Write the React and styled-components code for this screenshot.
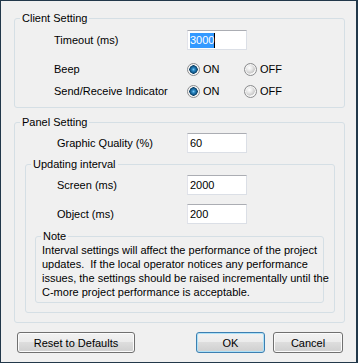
import React from "react";
import styled, { createGlobalStyle } from "styled-components";

const Global = createGlobalStyle`
  html, body {
    margin: 0;
    padding: 0;
    background: #f0f0f0;
  }
  * {
    box-sizing: border-box;
  }
`;

const Window = styled.div`
  width: 358px;
  height: 363px;
  background: #f0f0f0;
  border-style: solid;
  border-color: #22384a;
  border-width: 1px 2px 1px 1px;
  font-family: "Liberation Sans", Arial, sans-serif;
  font-size: 11px;
  color: #000;
  display: flex;
  flex-direction: column;
  overflow: hidden;
`;

const Group = styled.fieldset`
  margin: ${(p) => p.$margin || "0"};
  padding: 0 0 ${(p) => p.$pb || 0}px 0;
  width: ${(p) => p.$width}px;
  min-width: 0;
  border: 1px solid #d5dfe5;
  border-radius: 3px;
  display: flex;
  flex-direction: column;
`;

const Legend = styled.legend`
  margin-left: 5px;
  padding: 0 2px;
  line-height: 13px;
  height: 13px;
`;

const Row = styled.div`
  display: flex;
  align-items: center;
  height: ${(p) => p.$h || 20}px;
  margin-top: ${(p) => p.$mt || 0}px;
  padding-left: ${(p) => p.$pl}px;
`;

const Label = styled.div`
  width: ${(p) => p.$w}px;
  white-space: nowrap;
  line-height: 13px;
`;

const TextBox = styled.div`
  width: 60px;
  height: 20px;
  background: #fff;
  border: 1px solid #dbdfe6;
  border-top-color: #abadb3;
  border-left-color: #e2e3ea;
  padding-left: 2px;
  display: flex;
  align-items: center;
  line-height: 13px;
`;

const Selected = styled.span`
  background: #3399ff;
  color: #fff;
  padding: 1px 0;
  border-right: 1px solid #000;
`;

const RadioGroup = styled.div`
  display: flex;
`;

const RadioItem = styled.label`
  display: flex;
  align-items: center;
  width: 57px;
  line-height: 13px;
`;

const RadioDot = styled.span`
  width: 13px;
  height: 13px;
  border-radius: 50%;
  border: 1px solid #8b8c8e;
  margin-right: 3px;
  background: ${(p) =>
    p.$on
      ? "radial-gradient(circle at 50% 50%, #7ccbf5 0, #2a86c2 1.5px, #0e4f7d 3.5px, #0a3e63 4px, #e8e8e8 4.5px, #fafafa 6px)"
      : "radial-gradient(circle at 40% 35%, #ffffff 0, #e6e6e6 3px, #c9c9c9 5.5px, #f4f4f4 6px)"};
  box-shadow: inset 0 0 0 1px #f6f6f6;
  flex-shrink: 0;
`;

const NoteText = styled.div`
  padding: 0 4px 0 6px;
  line-height: 14px;
  white-space: pre;
`;

const Footer = styled.div`
  display: flex;
  margin-top: 9px;
  padding: 0 13px 0 16px;
`;

const Spacer = styled.div`
  flex: 1;
`;

const Button = styled.button`
  width: ${(p) => p.$w}px;
  height: 21px;
  margin-left: ${(p) => p.$ml || 0}px;
  font-family: "Liberation Sans", Arial, sans-serif;
  font-size: 11px;
  color: #000;
  padding: 0;
  border-radius: 3px;
  border: 1px solid ${(p) => (p.$default ? "#3c7fb1" : "#707070")};
  background: linear-gradient(#f2f2f2 0%, #ebebeb 49%, #dddddd 50%, #cfcfcf 100%);
  box-shadow: inset 0 0 0 1px ${(p) => (p.$default ? "#aee1f7" : "#fbfbfb")};
`;

const Radio = ({ on, children }) => (
  <RadioItem>
    <RadioDot $on={on} />
    {children}
  </RadioItem>
);

const noteLines = [
  "Interval settings will affect the performance of the project",
  "updates.  If the local operator notices any performance",
  "issues, the settings should be raised incrementally until the",
  "C-more project performance is acceptable.",
];

export default function App() {
  return (
    <>
      <Global />
      <Window>
        <Group $width={331} $margin="11px 0 0 13px" $pb={8}>
          <Legend>Client Setting</Legend>
          <Row $mt={5} $pl={39}>
            <Label $w={133}>Timeout (ms)</Label>
            <TextBox>
              <Selected>3000</Selected>
            </TextBox>
          </Row>
          <Row $mt={11} $h={16} $pl={39}>
            <Label $w={133}>Beep</Label>
            <RadioGroup>
              <Radio on>ON</Radio>
              <Radio>OFF</Radio>
            </RadioGroup>
          </Row>
          <Row $mt={6} $h={16} $pl={39}>
            <Label $w={133}>Send/Receive Indicator</Label>
            <RadioGroup>
              <Radio on>ON</Radio>
              <Radio>OFF</Radio>
            </RadioGroup>
          </Row>
        </Group>

        <Group $width={331} $margin="8px 0 0 13px" $pb={9}>
          <Legend>Panel Setting</Legend>
          <Row $mt={4} $pl={42}>
            <Label $w={130}>Graphic Quality (%)</Label>
            <TextBox>60</TextBox>
          </Row>
          <Group $width={310} $margin="5px 0 0 10px">
            <Legend>Updating interval</Legend>
            <Row $mt={4} $pl={31}>
              <Label $w={130}>Screen (ms)</Label>
              <TextBox>2000</TextBox>
            </Row>
            <Row $mt={9} $pl={31}>
              <Label $w={130}>Object (ms)</Label>
              <TextBox>200</TextBox>
            </Row>
            <Group $width={289} $margin="6px 0 9px 9px" $pb={3}>
              <Legend>Note</Legend>
              <NoteText>{noteLines.join("\n")}</NoteText>
            </Group>
          </Group>
        </Group>

        <Footer>
          <Button $w={118}>Reset to Defaults</Button>
          <Spacer />
          <Button $w={69} $default>
            OK
          </Button>
          <Button $w={70} $ml={8}>
            Cancel
          </Button>
        </Footer>
      </Window>
    </>
  );
}
